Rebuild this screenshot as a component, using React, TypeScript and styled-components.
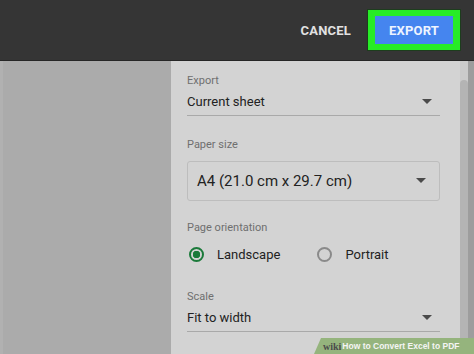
import styled, { createGlobalStyle } from "styled-components";

const GlobalStyle = createGlobalStyle`
  html, body {
    margin: 0;
    padding: 0;
    width: 474px;
    height: 354px;
    overflow: hidden;
    font-family: Roboto, "Liberation Sans", sans-serif;
  }
`;

function Caret() {
  return (
    <svg width="10" height="6" viewBox="0 0 10 6">
      <path d="M0 0 L10 0 L5 5 Z" fill="#4a4a4a" />
    </svg>
  );
}

function App() {
  return (
    <Screen>
      <GlobalStyle />
      <TopBar>
        <TextButton>CANCEL</TextButton>
        <Highlight>
          <ExportButton>EXPORT</ExportButton>
        </Highlight>
      </TopBar>

      <Body>
        <Backdrop />
        <Panel>
          <Form>
            <Field $top={13}>
              <Label>Export</Label>
              <Select $underline>
                <span>Current sheet</span>
                <Caret />
              </Select>
            </Field>

            <Field $top={22}>
              <Label>Paper size</Label>
              <Select $boxed>
                <span>A4 (21.0 cm x 29.7 cm)</span>
                <Caret />
              </Select>
            </Field>

            <Field $top={20}>
              <Label>Page orientation</Label>
              <RadioRow>
                <Radio>
                  <RadioDot $checked />
                  <span>Landscape</span>
                </Radio>
                <Radio>
                  <RadioDot />
                  <span>Portrait</span>
                </Radio>
              </RadioRow>
            </Field>

            <Field $top={24}>
              <Label>Scale</Label>
              <Select $underline>
                <span>Fit to width</span>
                <Caret />
              </Select>
            </Field>
          </Form>
          <Track>
            <Thumb />
          </Track>
          <Edge />
        </Panel>
      </Body>

      <Watermark>
        <Wiki>wiki</Wiki>
        <b>How</b>&nbsp;to Convert Excel to PDF
      </Watermark>
    </Screen>
  );
}

export default App;

const Screen = styled.div`
  position: relative;
  width: 474px;
  height: 354px;
  overflow: hidden;
  background: #d3d3d3;
`;

const TopBar = styled.div`
  height: 61px;
  background: #353535;
  border-bottom: 1px solid #262626;
  box-sizing: border-box;
  display: flex;
  align-items: center;
  justify-content: flex-end;
  padding-right: 14px;
  gap: 17px;
`;

const TextButton = styled.div`
  color: #e2e2e2;
  font-size: 13px;
  font-weight: 700;
  letter-spacing: 0.2px;
  padding-top: 1px;
`;

const Highlight = styled.div`
  background: #27ec27;
  outline: 1px solid #1d3d1d;
  padding: 6px 7px;
  display: flex;
`;

const ExportButton = styled.div`
  background: #4585ef;
  color: #eef4ff;
  font-size: 13px;
  font-weight: 700;
  letter-spacing: 0.2px;
  width: 78px;
  height: 28px;
  display: flex;
  align-items: center;
  justify-content: center;
`;

const Body = styled.div`
  display: flex;
  height: 293px;
`;

const Backdrop = styled.div`
  width: 171px;
  background: #ababab;
  border-left: 3px solid #b1b1b1;
  box-sizing: border-box;
`;

const Panel = styled.div`
  flex: 1;
  display: flex;
  background: #d3d3d3;
  padding-left: 16px;
`;

const Form = styled.div`
  width: 253px;
  display: flex;
  flex-direction: column;
`;

const Field = styled.div<{ $top: number }>`
  display: flex;
  flex-direction: column;
  margin-top: ${(p) => p.$top}px;
`;

const Label = styled.div`
  font-size: 11px;
  color: #6f6f6f;
  height: 14px;
  line-height: 14px;
  margin-bottom: 4px;
`;

const Select = styled.div<{ $underline?: boolean; $boxed?: boolean }>`
  display: flex;
  align-items: center;
  justify-content: space-between;
  color: #222;
  height: ${(p) => (p.$boxed ? "40px" : "24px")};
  box-sizing: border-box;
  border-bottom: ${(p) => (p.$underline ? "1px solid #a9a9a9" : "none")};
  border: ${(p) => (p.$boxed ? "1px solid #bdbdbd" : undefined)};
  border-radius: ${(p) => (p.$boxed ? "3px" : "0")};
  padding: ${(p) => (p.$boxed ? "0 13px 0 9px" : "0 8px 4px 0")};
  margin-top: ${(p) => (p.$boxed ? "5px" : "0")};
  font-size: ${(p) => (p.$boxed ? "15px" : "13px")};
`;

const RadioRow = styled.div`
  display: flex;
  gap: 35px;
  margin-top: 3px;
  height: 24px;
  align-items: center;
`;

const Radio = styled.div`
  display: flex;
  align-items: center;
  gap: 13px;
  font-size: 13px;
  color: #222;
`;

const RadioDot = styled.div<{ $checked?: boolean }>`
  width: 15px;
  height: 15px;
  border-radius: 50%;
  box-sizing: border-box;
  border: 2px solid ${(p) => (p.$checked ? "#1b7a3a" : "#8a8a8a")};
  background: ${(p) =>
    p.$checked ? "radial-gradient(circle, #1b7a3a 0 3.5px, transparent 4px)" : "transparent"};
  margin-left: 2px;
`;

const Track = styled.div`
  margin-left: auto;
  width: 8px;
  padding-top: 19px;
  background: #cbcbcb;
  display: flex;
`;

const Thumb = styled.div`
  flex: 1;
  background: #b4b4b4;
  border-radius: 4px 4px 0 0;
`;

const Edge = styled.div`
  width: 6px;
  background: #9d9d9d;
`;

const Watermark = styled.div`
  position: absolute;
  right: 0;
  bottom: 0;
  height: 16px;
  width: 160px;
  background: #95b47d;
  clip-path: polygon(7px 0, 100% 0, 100% 100%, 0 100%);
  color: #f4f4f4;
  font-family: "Liberation Sans", sans-serif;
  font-size: 8.5px;
  font-weight: 700;
  display: flex;
  align-items: center;
  padding-left: 9px;
  box-sizing: border-box;
  white-space: nowrap;
`;

const Wiki = styled.span`
  color: #4b4b4b;
  font-family: "Liberation Serif", serif;
  font-size: 10px;
  margin-right: 1px;
`;
